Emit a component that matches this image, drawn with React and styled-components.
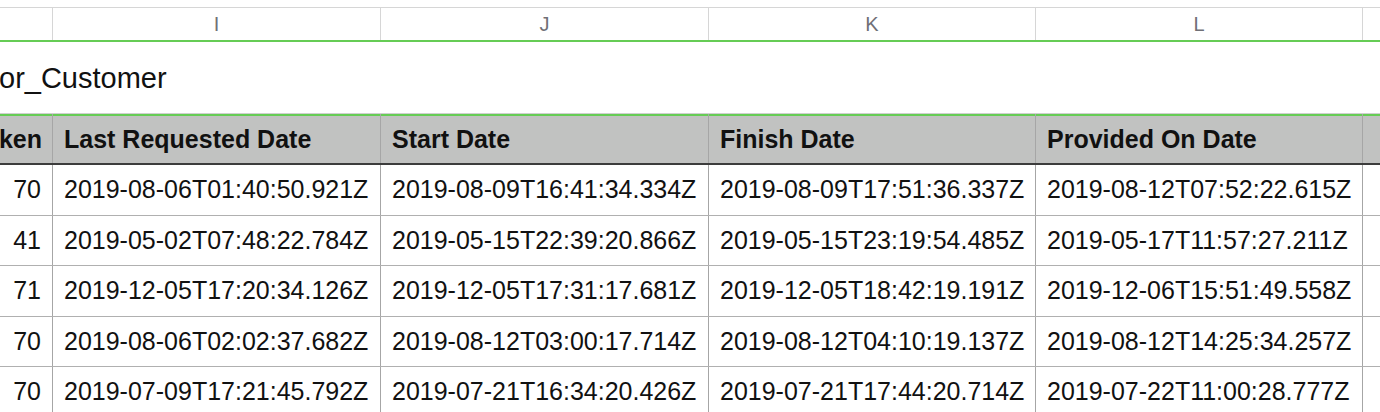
import React from 'react';
import styled, { createGlobalStyle } from 'styled-components';

const GlobalStyle = createGlobalStyle`
  body {
    margin: 0;
    background: #ffffff;
    font-family: "Liberation Sans", Arial, sans-serif;
  }
`;

const columns = '52px 328px 328px 327px 327px 1fr';

const letters = ['', 'I', 'J', 'K', 'L', ''];

const headers = ['ken', 'Last Requested Date', 'Start Date', 'Finish Date', 'Provided On Date', ''];

const rows = [
  ['70', '2019-08-06T01:40:50.921Z', '2019-08-09T16:41:34.334Z', '2019-08-09T17:51:36.337Z', '2019-08-12T07:52:22.615Z'],
  ['41', '2019-05-02T07:48:22.784Z', '2019-05-15T22:39:20.866Z', '2019-05-15T23:19:54.485Z', '2019-05-17T11:57:27.211Z'],
  ['71', '2019-12-05T17:20:34.126Z', '2019-12-05T17:31:17.681Z', '2019-12-05T18:42:19.191Z', '2019-12-06T15:51:49.558Z'],
  ['70', '2019-08-06T02:02:37.682Z', '2019-08-12T03:00:17.714Z', '2019-08-12T04:10:19.137Z', '2019-08-12T14:25:34.257Z'],
  ['70', '2019-07-09T17:21:45.792Z', '2019-07-21T16:34:20.426Z', '2019-07-21T17:44:20.714Z', '2019-07-22T11:00:28.777Z'],
];

const App = () => {
  return (
    <Page>
      <GlobalStyle />
      <ColumnBar>
        {letters.map((l, i) => (
          <LetterCell key={i} first={i === 0}>{l}</LetterCell>
        ))}
      </ColumnBar>
      <TitleArea>
        <Title>or_Customer</Title>
      </TitleArea>
      <HeaderRow>
        {headers.map((h, i) => (
          <HeaderCell key={i} first={i === 0}>{h}</HeaderCell>
        ))}
      </HeaderRow>
      {rows.map((r, ri) => (
        <DataRow key={ri}>
          {r.map((v, i) => (
            <DataCell key={i} first={i === 0}>{v}</DataCell>
          ))}
          <DataCell />
        </DataRow>
      ))}
    </Page>
  );
};

export default App;

const Page = styled.div`
  width: 1380px;
  height: 412px;
  overflow: hidden;
  padding-top: 7px;
  box-sizing: border-box;
  background: #ffffff;
`;

const ColumnBar = styled.div`
  display: grid;
  grid-template-columns: ${columns};
  height: 32px;
  border-top: 1px solid #d6d6d6;
  border-bottom: 2px solid #66cc55;
`;

const LetterCell = styled.div`
  display: flex;
  align-items: center;
  justify-content: center;
  border-left: ${(p) => (p.first ? 'none' : '1px solid #d6d6d6')};
  color: #707076;
  font-size: 20px;
  font-weight: 300;
`;

const TitleArea = styled.div`
  height: 71px;
  display: flex;
  align-items: center;
`;

const Title = styled.div`
  margin-left: -1px;
  margin-top: 2px;
  font-size: 29px;
  color: #111111;
  white-space: nowrap;
`;

const HeaderRow = styled.div`
  display: grid;
  grid-template-columns: ${columns};
  height: 49px;
  border-top: 1px solid #d0d0d0;
  border-bottom: 2px solid #3c3c3c;
  background: #c1c2c1;
  box-shadow: inset 0 2px 0 #66cc55;
`;

const HeaderCell = styled.div`
  display: flex;
  align-items: center;
  justify-content: ${(p) => (p.first ? 'flex-end' : 'flex-start')};
  padding: ${(p) => (p.first ? '2px 10px 0 0' : '2px 11px 0 11px')};
  overflow: hidden;
  white-space: nowrap;
  border-left: ${(p) => (p.first ? 'none' : '1px solid #a6a6a6')};
  font-size: 25px;
  font-weight: bold;
  color: #111111;
`;

const DataRow = styled.div`
  display: grid;
  grid-template-columns: ${columns};
  height: 49.5px;
  border-bottom: 1px solid #b0b0b0;
`;

const DataCell = styled.div`
  display: flex;
  align-items: center;
  justify-content: ${(p) => (p.first ? 'flex-end' : 'flex-start')};
  padding: 0 11px;
  overflow: hidden;
  white-space: nowrap;
  border-left: ${(p) => (p.first ? 'none' : '1px solid #a6a6a6')};
  font-size: 25px;
  color: #111111;
`;
